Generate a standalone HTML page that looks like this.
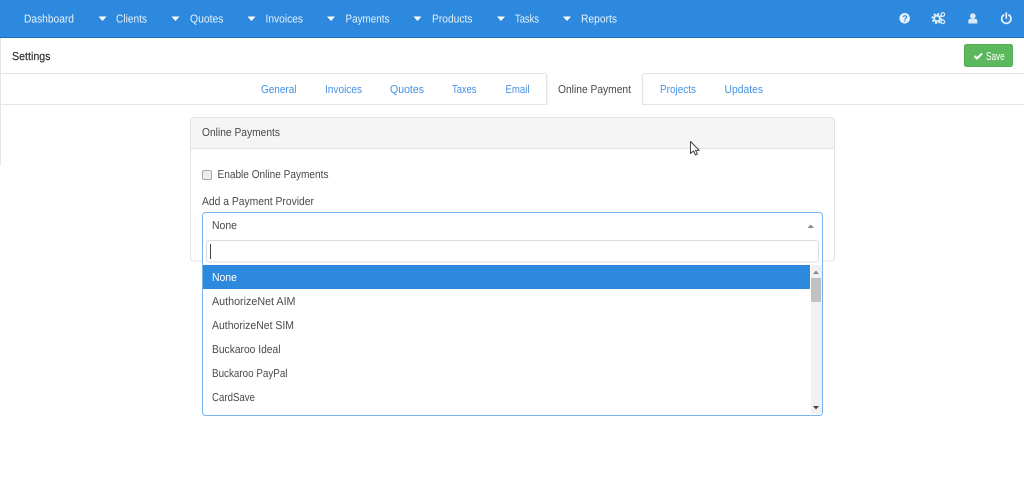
<!DOCTYPE html>
<html><head><meta charset="utf-8"><title>Settings</title>
<style>
html,body{margin:0;padding:0;background:#fff;width:1024px;height:477px;overflow:hidden}
svg{display:block}
text{font-family:"Liberation Sans",sans-serif;font-size:11.5px;text-rendering:geometricPrecision}
.n{fill:#e6f1fb}
.t{fill:#4592e2}
.d{fill:#4a4a4a}
</style></head><body>
<svg width="1024" height="477" viewBox="0 0 1024 477" xmlns="http://www.w3.org/2000/svg">
<rect width="1024" height="477" fill="#fff"/>
<!-- nav -->
<rect width="1024" height="37" fill="#2d89dd"/>
<rect y="37" width="1024" height="1" fill="#1c6fb9"/>
<g class="n">
<text x="24" y="22.700" textLength="50" lengthAdjust="spacingAndGlyphs">Dashboard</text>
<text x="116" y="22.700" textLength="31" lengthAdjust="spacingAndGlyphs">Clients</text>
<text x="190" y="22.700" textLength="33.500" lengthAdjust="spacingAndGlyphs">Quotes</text>
<text x="265.500" y="22.700" textLength="37.500" lengthAdjust="spacingAndGlyphs">Invoices</text>
<text x="345.500" y="22.700" textLength="44" lengthAdjust="spacingAndGlyphs">Payments</text>
<text x="432" y="22.700" textLength="40.500" lengthAdjust="spacingAndGlyphs">Products</text>
<text x="515" y="22.700" textLength="24" lengthAdjust="spacingAndGlyphs">Tasks</text>
<text x="581" y="22.700" textLength="36" lengthAdjust="spacingAndGlyphs">Reports</text>
<path d="M98.500 16.500h8l-4 4.500zM171.500 16.500h8l-4 4.500zM247.500 16.500h8l-4 4.500zM327 16.500h8l-4 4.500zM413.500 16.500h8l-4 4.500zM497 16.500h8l-4 4.500zM563 16.500h8l-4 4.500z" fill="#fff"/>
</g>
<!-- right icons -->
<circle cx="904.700" cy="18.300" r="5.300" fill="#e6f1fb"/>
<text x="902.300" y="21.700" style="font-size:9px;font-weight:bold;fill:#2d89dd">?</text>
<g fill="none" stroke="#e0edf9">
<circle cx="937" cy="18.500" r="2.900" stroke-width="2"/>
<circle cx="937" cy="18.500" r="4.600" stroke-width="1.800" stroke-dasharray="2 1.610"/>
<circle cx="942.800" cy="14.500" r="1.800" stroke-width="1.200"/>
<circle cx="942.800" cy="21.800" r="1.800" stroke-width="1.200"/>
</g>
<circle cx="972.800" cy="16" r="2.800" fill="#dbe9f7"/>
<path d="M968.300 23.500v-2.300q0-2.500 2.500-2.500h4q2.500 0 2.500 2.500v2.300z" fill="#dbe9f7"/>
<path d="M1003.700 15a4.600 4.600 0 1 0 5.200 0" fill="none" stroke="#e6f1fb" stroke-width="1.700" stroke-linecap="round"/>
<path d="M1006.300 13v5" stroke="#e6f1fb" stroke-width="1.700" stroke-linecap="round"/>
<!-- settings row -->
<rect x="0" y="38" width="1" height="127" fill="#e4e4e4"/>
<text x="12" y="60" textLength="38.500" lengthAdjust="spacingAndGlyphs" fill="#333" stroke="#333" stroke-width=".2">Settings</text>
<rect x="964.500" y="44.500" width="48" height="22" rx="2" fill="#5cb85c" stroke="#52ad52"/>
<path d="M974.500 56l2.500 2.500 5-5" fill="none" stroke="#fff" stroke-width="2"/>
<text x="986" y="60" textLength="18.700" lengthAdjust="spacingAndGlyphs" fill="#fff" style="font-size:11.500px">Save</text>
<rect x="0" y="73" width="1024" height="1" fill="#e4e4e4"/>
<rect x="0" y="104" width="1024" height="1" fill="#e4e4e4"/>
<!-- tabs -->
<rect x="546" y="73" width="97" height="32" fill="#fff"/>
<path d="M546.700 74v31M642.500 74v31" stroke="#e6e6e6" stroke-width="1.400"/>
<g class="t">
<text x="261" y="93" textLength="35.500" lengthAdjust="spacingAndGlyphs">General</text>
<text x="325" y="93" textLength="37" lengthAdjust="spacingAndGlyphs">Invoices</text>
<text x="390" y="93" textLength="34" lengthAdjust="spacingAndGlyphs">Quotes</text>
<text x="452" y="93" textLength="24.500" lengthAdjust="spacingAndGlyphs">Taxes</text>
<text x="505.500" y="93" textLength="24" lengthAdjust="spacingAndGlyphs">Email</text>
<text x="660" y="93" textLength="36" lengthAdjust="spacingAndGlyphs">Projects</text>
<text x="724.500" y="93" textLength="38.500" lengthAdjust="spacingAndGlyphs">Updates</text>
</g>
<text x="558" y="93" textLength="73" lengthAdjust="spacingAndGlyphs" class="d">Online Payment</text>
<!-- panel -->
<rect x="190.500" y="117.500" width="644" height="143.500" rx="3" fill="#fff" stroke="#e2e2e2"/>
<path d="M191 148V120.500a2.500 2.500 0 0 1 2.500-2.500h638a2.500 2.500 0 0 1 2.500 2.500V148z" fill="#f5f5f5"/>
<rect x="191" y="148" width="643" height="1" fill="#e4e4e4"/>
<text x="202" y="136" textLength="78" lengthAdjust="spacingAndGlyphs" class="d">Online Payments</text>
<rect x="202.500" y="170.500" width="9" height="9" rx="1.500" fill="#ececec" stroke="#a8a8a8"/>
<text x="217.500" y="178" textLength="111" lengthAdjust="spacingAndGlyphs" class="d">Enable Online Payments</text>
<text x="202" y="205" textLength="112" lengthAdjust="spacingAndGlyphs" class="d">Add a Payment Provider</text>
<!-- select -->
<rect x="202.500" y="212.500" width="620" height="203" rx="3" fill="#fff" stroke="#74b5f0"/>
<text x="212" y="229" textLength="25" lengthAdjust="spacingAndGlyphs" class="d">None</text>
<path d="M807.500 228l3.200-3.500 3.300 3.500z" fill="#888"/>
<rect x="206.500" y="240.500" width="612" height="21.500" rx="2.500" fill="#fff" stroke="#dcdcdc"/>
<rect x="210" y="244" width="1" height="15" fill="#444"/>
<rect x="203" y="265" width="607" height="24" fill="#2d89dd"/>
<text x="212" y="281" textLength="25" lengthAdjust="spacingAndGlyphs" fill="#fff">None</text>
<g class="d">
<text x="212" y="305" textLength="83.500" lengthAdjust="spacingAndGlyphs">AuthorizeNet AIM</text>
<text x="212" y="329" textLength="82" lengthAdjust="spacingAndGlyphs">AuthorizeNet SIM</text>
<text x="212" y="353" textLength="68.500" lengthAdjust="spacingAndGlyphs">Buckaroo Ideal</text>
<text x="212" y="377" textLength="75.500" lengthAdjust="spacingAndGlyphs">Buckaroo PayPal</text>
<text x="212" y="401" textLength="43" lengthAdjust="spacingAndGlyphs">CardSave</text>
</g>
<!-- scrollbar -->
<rect x="811" y="265" width="11" height="149" fill="#f1f1f1"/>
<rect x="811" y="278" width="10" height="24" fill="#c1c1c1"/>
<path d="M813 274l3-3.500 3 3.500z" fill="#8a8a8a"/>
<path d="M813 406h6l-3 3.500z" fill="#444"/>
<!-- cursor -->
<path d="M690.500 141.500v12l3-2.500 2 4 2-1-2-3.700h3.800z" fill="#fff" stroke="#333" stroke-width=".9" stroke-linejoin="round"/>
</svg>
</body></html>
